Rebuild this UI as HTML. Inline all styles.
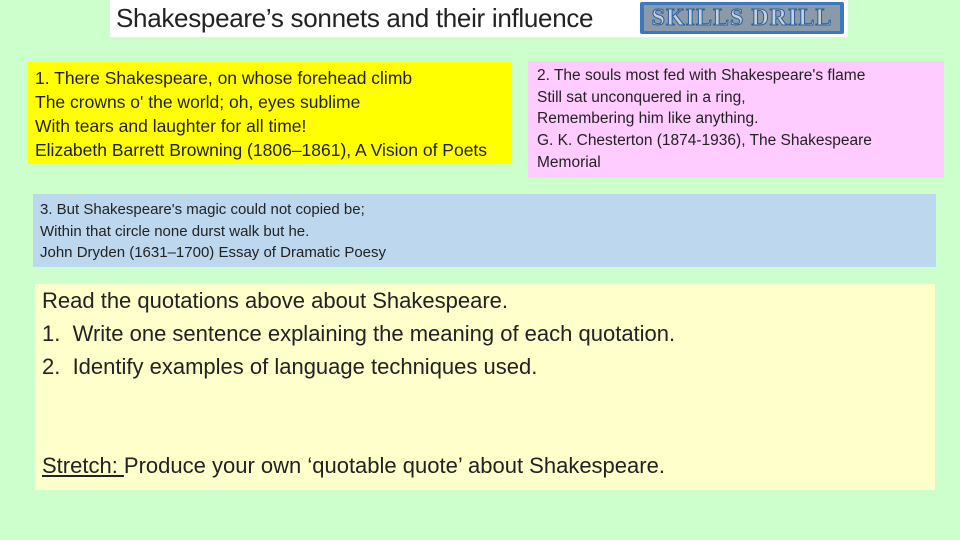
<!DOCTYPE html>
<html><head><meta charset="utf-8"><style>
body{margin:0;width:960px;height:540px;background:#ccffcc;position:relative;overflow:hidden;font-family:"Liberation Sans","DejaVu Sans",sans-serif;}
div{position:absolute;box-sizing:border-box;}
.t{left:110px;top:0;width:738px;height:37px;background:#fff;}
.t span{position:absolute;left:6px;top:3px;font-size:26px;color:#222;letter-spacing:-0.3px;}
.logo{left:640px;top:2px;width:204px;height:32px;background:#3a78c0;border-radius:2px;}
.logo span{position:absolute;left:4px;right:4px;top:3px;bottom:3px;background:#8a9aa8;color:#c8d0d8;font:bold 24px "Liberation Serif",serif;text-align:center;line-height:26px;letter-spacing:1px;-webkit-text-stroke:1px #2a60a0;}
.y{left:28px;top:62px;width:484px;height:102px;background:#ffff00;padding:4px 7px;font-size:17.5px;line-height:24px;color:#222;white-space:nowrap;}
.p{left:528px;top:61px;width:416px;height:117px;background:#ffccff;padding:4px 9px;font-size:15.5px;line-height:21.7px;color:#222;white-space:nowrap;}
.b{left:33px;top:194px;width:903px;height:73px;background:#bdd7ee;padding:5px 7px;font-size:15px;line-height:21.7px;color:#222;}
.l{left:35px;top:284px;width:900px;height:206px;background:#ffffcc;padding:0 7px;font-size:22px;line-height:33px;color:#222;white-space:nowrap;}
</style></head><body>
<div class="t"><span>Shakespeare’s sonnets and their influence</span></div>
<div class="logo"><span>SKILLS DRILL</span></div>
<div class="y">1. There Shakespeare, on whose forehead climb<br>The crowns o' the world; oh, eyes sublime<br>With tears and laughter for all time!<br>Elizabeth Barrett Browning (1806–1861), A Vision of Poets</div>
<div class="p">2. The souls most fed with Shakespeare's flame<br>Still sat unconquered in a ring,<br>Remembering him like anything.<br>G. K. Chesterton (1874-1936), The Shakespeare<br>Memorial</div>
<div class="b">3. But Shakespeare's magic could not copied be;<br>Within that circle none durst walk but he.<br>John Dryden (1631–1700) Essay of Dramatic Poesy</div>
<div class="l">Read the quotations above about Shakespeare.<br>1.&nbsp; Write one sentence explaining the meaning of each quotation.<br>2.&nbsp; Identify examples of language techniques used.<br><br><br><u>Stretch: </u>Produce your own ‘quotable quote’ about Shakespeare.</div>
</body></html>
